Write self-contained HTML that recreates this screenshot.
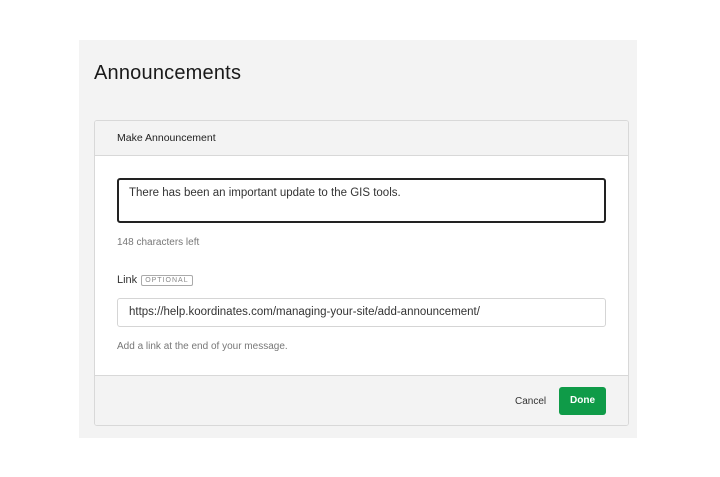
<!DOCTYPE html>
<html><head><style>
*{box-sizing:border-box;margin:0;padding:0}
body{width:720px;height:477px;background:#fff;font-family:"Liberation Sans",sans-serif;position:relative;overflow:hidden;color:#222}
.bg{position:absolute;left:79px;top:40px;width:558px;height:398px;background:#f3f3f3}
h1{position:absolute;left:94px;top:62px;font-size:20px;font-weight:normal;color:#1a1a1a;letter-spacing:0.2px}
.card{position:absolute;left:94px;top:120px;width:535px;height:306px;border:1px solid #d8d8d8;border-radius:3px;background:#fff;overflow:hidden}
.hd{height:35px;background:#f3f3f3;border-bottom:1px solid #d8d8d8;font-size:10.5px;padding:11px 0 0 22px;color:#222}
.ta{position:absolute;left:22px;top:57px;width:489px;height:45px;border:2px solid #222;border-radius:3px;font-size:11.5px;padding:7px 10px;color:#333}
.s{position:absolute;left:22px;font-size:10px;color:#777}
.lbl{position:absolute;left:22px;top:153px;font-size:11px;color:#333}
.opt{display:inline-block;border:1px solid #aaa;border-radius:2px;font-size:7px;letter-spacing:1px;color:#888;padding:1px 3px;margin-left:4px;vertical-align:1px}
.in{position:absolute;left:22px;top:177px;width:489px;height:29px;border:1px solid #d5d5d5;border-radius:3px;font-size:11.5px;padding:7px 11px;color:#333}
.ft{position:absolute;left:0;top:254px;width:100%;height:52px;background:#f3f3f3;border-top:1px solid #d8d8d8}
.cancel{position:absolute;left:420px;top:20px;font-size:10px;color:#333}
.done{position:absolute;left:464px;top:11px;width:47px;height:28px;background:#0f9b48;border-radius:3px;color:#fff;font-size:10px;font-weight:bold;text-align:center;line-height:28px}
</style></head><body>
<div class="bg"></div>
<h1>Announcements</h1>
<div class="card">
<div class="hd">Make Announcement</div>
<div class="ta">There has been an important update to the GIS tools.</div>
<div class="s" style="top:116px">148 characters left</div>
<div class="lbl">Link<span class="opt">OPTIONAL</span></div>
<div class="in">https://help.koordinates.com/managing-your-site/add-announcement/</div>
<div class="s" style="top:220px">Add a link at the end of your message.</div>
<div class="ft"><span class="cancel">Cancel</span><div class="done">Done</div></div>
</div>
</body></html>
